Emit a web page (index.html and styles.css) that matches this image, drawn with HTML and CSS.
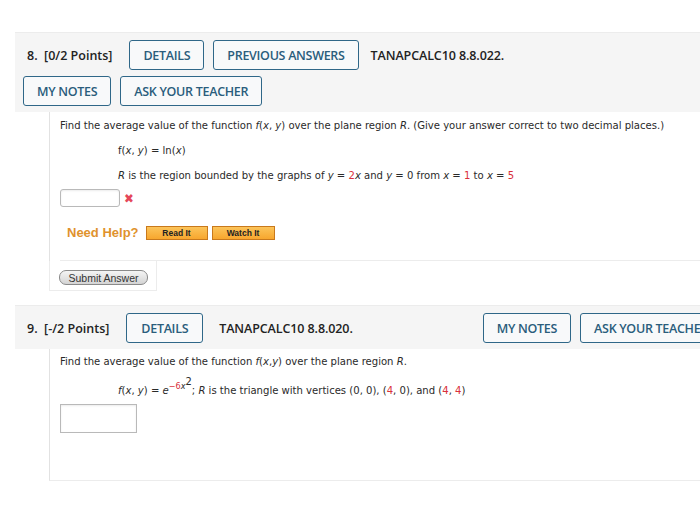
FILE: index.html
```html
<!DOCTYPE html>
<html lang="en">

<head>
    <meta charset="UTF-8">
    <meta name="viewport" content="width=device-width, initial-scale=1.0">
    <title>Assignment</title>
    <link rel="stylesheet" href="styles.css">
</head>

<body>
    <div class="question">
        <div class="q-head">
            <div class="q-row">
                <span class="q-label">8.&nbsp; [0/2 Points]</span>
                <button class="btn">DETAILS</button>
                <button class="btn">PREVIOUS ANSWERS</button>
                <span class="q-code">TANAPCALC10 8.8.022.</span>
            </div>
            <div class="q-row">
                <button class="btn">MY NOTES</button>
                <button class="btn">ASK YOUR TEACHER</button>
            </div>
        </div>
        <div class="q-body">
            <p class="q-text">Find the average value of the function <i>f</i>(<i>x</i>, <i>y</i>) over the plane region <i>R</i>. (Give your answer correct to two decimal places.)</p>
            <p class="q-math">f(<i>x</i>, <i>y</i>) = ln(<i>x</i>)</p>
            <p class="q-math"><i>R</i> is the region bounded by the graphs of <i>y</i> = <span class="red">2</span><i>x</i> and <i>y</i> = 0 from <i>x</i> = <span class="red">1</span> to <i>x</i> = <span class="red">5</span></p>
            <div class="answer">
                <input class="ans-box small" type="text">
                <span class="wrong">&#10006;</span>
            </div>
            <div class="help">
                <span class="help-label">Need Help?</span>
                <button class="help-btn">Read It</button>
                <button class="help-btn">Watch It</button>
            </div>
        </div>
        <div class="submit-wrap">
            <button class="submit">Submit Answer</button>
        </div>
    </div>

    <div class="question second">
        <div class="q-head">
            <div class="q-row">
                <span class="q-label">9.&nbsp; [-/2 Points]</span>
                <button class="btn">DETAILS</button>
                <span class="q-code">TANAPCALC10 8.8.020.</span>
                <button class="btn push">MY NOTES</button>
                <button class="btn last-btn">ASK YOUR TEACHER</button>
            </div>
        </div>
        <div class="q-body last">
            <p class="q-text">Find the average value of the function <i>f</i>(<i>x</i>,<i>y</i>) over the plane region <i>R</i>.</p>
            <p class="q-math two"><i>f</i>(<i>x</i>, <i>y</i>) = <i>e</i><sup><span class="red">&minus;6</span><i>x</i><sup>2</sup></sup>; <i>R</i> is the triangle with vertices (0, 0), (<span class="red">4</span>, 0), and (<span class="red">4</span>, <span class="red">4</span>)</p>
            <input class="ans-box big" type="text">
        </div>
    </div>
</body>

</html>
```

FILE: styles.css
```css
* {
    margin: 0;
    padding: 0;
    box-sizing: border-box;
}

body {
    width: 700px;
    overflow: hidden;
    background-color: #fff;
    padding-top: 32px;
    font-family: "Open Sans", sans-serif;
    color: #333;
}

.q-head {
    margin-left: 15px;
    background-color: #f5f5f5;
    border-top: 1px solid #ececec;
    padding: 7px 0 6px 8px;
    display: flex;
    flex-direction: column;
    gap: 6px;
}

.q-row {
    display: flex;
    align-items: center;
    height: 30px;
    white-space: nowrap;
}

.q-label {
    font-size: 12.5px;
    font-weight: 600;
    color: #222;
    padding-left: 4px;
    margin-right: 17px;
}

.btn {
    height: 30px;
    padding: 0 13px;
    background-color: #f8f9fa;
    border: 1.5px solid #2f6788;
    border-radius: 3px;
    color: #2a5d7c;
    font-family: "Open Sans", sans-serif;
    font-size: 12.5px;
    font-weight: 600;
    letter-spacing: -0.3px;
    margin-right: 9px;
}

.q-code {
    font-size: 12.5px;
    font-weight: 600;
    color: #222;
    margin-left: 3px;
    letter-spacing: -0.1px;
}

.second .q-code {
    margin-left: 7px;
}

.second .btn:first-of-type {
    padding: 0 14px;
}

.push {
    margin-left: auto;
}

.last-btn {
    margin-right: -22px;
}

.q-body {
    margin-left: 49px;
    border-left: 1px solid #e2e2e2;
    padding: 7px 0 0 10px;
    font-family: "DejaVu Sans Condensed", "DejaVu Sans", sans-serif;
    font-size: 11.2px;
    color: #2a2a2a;
}

.q-text {
    line-height: 14px;
}

.q-math {
    padding-left: 58px;
    margin-top: 11px;
    line-height: 14px;
}

.q-math.two {
    margin-top: 13px;
}

.red {
    color: #d9303a;
}

sup {
    font-size: 9px;
    line-height: 0;
}

sup sup {
    font-size: 11px;
    vertical-align: 4px;
}

.answer {
    display: flex;
    align-items: center;
    gap: 4px;
    margin-top: 6px;
}

.ans-box {
    border: 1px solid #b9b9b9;
    background-color: #fff;
    box-shadow: inset 0 1px 2px rgba(0, 0, 0, 0.08);
}

.ans-box.small {
    width: 60px;
    height: 18px;
    border-radius: 3px;
}

.ans-box.big {
    display: block;
    width: 77px;
    height: 29px;
    margin-top: 6px;
}

.wrong {
    color: #e5475a;
    font-size: 13px;
    font-weight: bold;
}

.help {
    display: flex;
    align-items: center;
    gap: 4px;
    margin-top: 18px;
    padding-left: 7px;
    padding-bottom: 20px;
    border-bottom: 1px solid #ececec;
}

.help-label {
    font-family: "Liberation Sans", Arial, sans-serif;
    font-weight: bold;
    font-size: 13px;
    color: #e0922d;
    margin-right: 3px;
}

.help-btn {
    width: 62px;
    height: 14px;
    background: linear-gradient(#fcc45a, #f7a62e);
    border: 1px solid #c9791c;
    font-family: "Liberation Sans", Arial, sans-serif;
    font-size: 8.5px;
    font-weight: bold;
    color: #222;
}

.help-btn + .help-btn {
    width: 63px;
}

.submit-wrap {
    margin-left: 49px;
    width: 108px;
    border: 1px solid #ececec;
    border-top: none;
    padding: 9px 0 5px 9px;
}

.submit {
    display: block;
    width: 89px;
    height: 15px;
    border: 1px solid #8a8a8a;
    border-radius: 7px;
    background: linear-gradient(#f4f4f4, #d4d4d4);
    font-family: "Liberation Sans", Arial, sans-serif;
    font-size: 10.5px;
    color: #333;
}

.second {
    margin-top: 14px;
}

.q-body.last {
    padding-top: 6px;
    height: 132px;
    border-bottom: 1px solid #ececec;
}
```
